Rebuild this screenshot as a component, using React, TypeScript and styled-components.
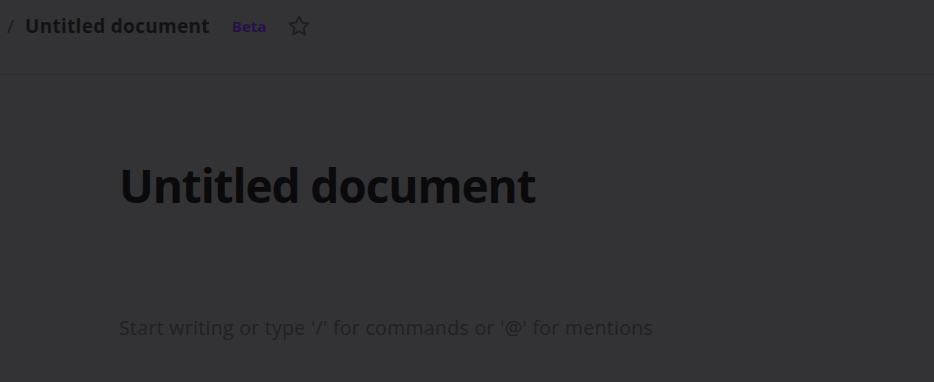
import React from "react";
import styled, { createGlobalStyle } from "styled-components";

const Global = createGlobalStyle`
  html, body { margin: 0; padding: 0; background: #333335; }
  body { font-family: "Open Sans", "Lato", sans-serif; }
`;

const Page = styled.div`
  width: 934px;
  height: 382px;
  background: #333335;
  overflow: hidden;
  display: flex;
  flex-direction: column;
`;

const Header = styled.header`
  height: 75px;
  box-sizing: border-box;
  border-bottom: 1px solid #2c2c2e;
  display: flex;
  align-items: flex-start;
  padding: 12px 0 0 7px;
`;

const Crumb = styled.div`
  display: flex;
  align-items: center;
  height: 28px;
`;

const Slash = styled.span`
  color: #1c1c1e;
  font-size: 19px;
  margin-right: 11px;
`;

const DocName = styled.span`
  color: #121214;
  font-size: 19px;
  font-weight: 700;
  letter-spacing: 0.3px;
`;

const Beta = styled.span`
  color: #26114a;
  font-size: 15px;
  font-weight: 700;
  margin-left: 22px;
`;

const StarBtn = styled.span`
  display: flex;
  align-items: center;
  margin-left: 21px;
  color: #1e1e20;
`;

const Body = styled.main`
  padding: 78px 0 0 119px;
  display: flex;
  flex-direction: column;
`;

const Title = styled.h1`
  margin: 0;
  color: #0a0a0c;
  font-size: 46px;
  font-weight: 700;
  letter-spacing: -1.1px;
  line-height: 64px;
`;

const Placeholder = styled.p`
  margin: 0;
  margin-top: 97px;
  color: #212123;
  font-size: 19.5px;
  letter-spacing: 0.3px;
  line-height: 28px;
`;

export default function App() {
  return (
    <Page>
      <Global />
      <Header>
        <Crumb>
          <Slash>/</Slash>
          <DocName>Untitled document</DocName>
          <Beta>Beta</Beta>
          <StarBtn>
            <svg width="24" height="24" viewBox="0 0 24 24" fill="none" stroke="currentColor" strokeWidth="1.8" strokeLinejoin="round">
              <polygon points="12 2.5 14.9 8.6 21.5 9.4 16.6 13.9 17.9 20.5 12 17.2 6.1 20.5 7.4 13.9 2.5 9.4 9.1 8.6 12 2.5" />
            </svg>
          </StarBtn>
        </Crumb>
      </Header>
      <Body>
        <Title>Untitled document</Title>
        <Placeholder>Start writing or type '/' for commands or '@' for mentions</Placeholder>
      </Body>
    </Page>
  );
}
